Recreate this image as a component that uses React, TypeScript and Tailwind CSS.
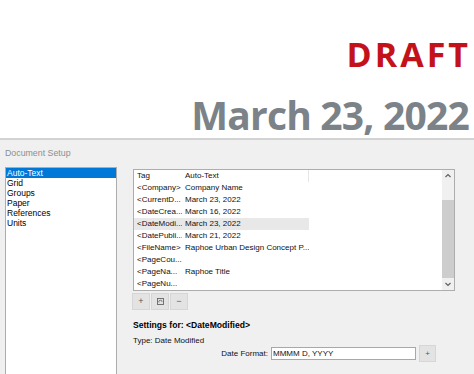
import React from "react";

const rows: [string, string][] = [
  ["<Company>", "Company Name"],
  ["<CurrentD...", "March 23, 2022"],
  ["<DateCrea...", "March 16, 2022"],
  ["<DateModi...", "March 23, 2022"],
  ["<DatePubli...", "March 21, 2022"],
  ["<FileName>", "Raphoe Urban Design Concept P..."],
  ["<PageCou...", ""],
  ["<PageNa...", "Raphoe Title"],
  ["<PageNu...", ""],
];

const items = ["Auto-Text", "Grid", "Groups", "Paper", "References", "Units"];

function SmallBtn({ children }: { children: React.ReactNode }) {
  return (
    <div className="w-[18px] h-[17px] bg-[#e3e3e3] border border-[#d6d6d6] flex items-center justify-center text-[#555]">
      {children}
    </div>
  );
}

export default function App() {
  return (
    <div className="w-[474px] h-[374px] overflow-hidden bg-white font-['Liberation_Sans',Arial,sans-serif]">
      <div className="h-[138px] flex flex-col items-end pr-[5px] font-['Open_Sans',sans-serif] font-bold">
        <div className="mt-[37px] text-[34px] leading-[34px] tracking-[3px] -mr-[2px] text-[#c4121a]">DRAFT</div>
        <div className="mt-[24px] text-[39px] leading-[39px] tracking-[-0.8px] text-[#7b8288]">March 23, 2022</div>
      </div>
      <div className="h-[236px] bg-[#f0f0f0] border-t-2 border-[#d2d2d2] flex flex-col">
        <div className="pl-[5px] pt-[7px] h-[27px] text-[8.8px] leading-[12px] text-[#8e8e8e]">Document Setup</div>
        <div className="flex flex-1">
          <div className="ml-[5px] w-[112px] bg-white border border-[#adadad] border-b-0 pt-0 text-[8.5px] text-black">
            {items.map((it, i) => (
              <div
                key={it}
                className={
                  i === 0
                    ? "h-[10px] leading-[10px] pl-[1px] bg-[#0078d7] text-white"
                    : "h-[10px] leading-[10px] pl-[1px]"
                }
              >
                {it}
              </div>
            ))}
          </div>
          <div className="flex-1 flex flex-col pl-[16px] pt-[2px]">
            <div className="w-[322px] h-[122px] bg-white border border-[#adadad] flex text-[8px] text-[#111]">
              <div className="flex-1 flex flex-col">
                <div className="flex h-[12px] items-center">
                  <div className="w-[48px] pl-[3px]">Tag</div>
                  <div className="w-[127px] h-full pl-[3px] flex items-center border-r border-[#e6e6e6]">Auto-Text</div>
                </div>
                {rows.map(([t, v], i) => (
                  <div key={i} className={i === 3 ? "flex h-[12px] items-center bg-[#e8e8e8] w-[175px]" : "flex h-[12px] items-center"}>
                    <div className="w-[48px] pl-[3px] whitespace-nowrap overflow-hidden">{t}</div>
                    <div className="w-[127px] pl-[3px] whitespace-nowrap overflow-hidden">{v}</div>
                  </div>
                ))}
              </div>
              <div className="w-[12px] bg-[#f0f0f0] flex flex-col items-center">
                <svg width="12" height="12" viewBox="0 0 12 12" className="shrink-0">
                  <path d="M3.5 7 L6 4.5 L8.5 7" fill="none" stroke="#606060" strokeWidth="1.2" />
                </svg>
                <div className="h-[18px]" />
                <div className="w-[12px] h-[78px] bg-[#cdcdcd]" />
                <div className="flex-1" />
                <svg width="12" height="11" viewBox="0 0 12 11" className="shrink-0">
                  <path d="M3.5 4 L6 6.5 L8.5 4" fill="none" stroke="#606060" strokeWidth="1.2" />
                </svg>
              </div>
            </div>
            <div className="flex gap-[1px] mt-[2px] -ml-[1px]">
              <SmallBtn>
                <span className="text-[9px] leading-none">+</span>
              </SmallBtn>
              <SmallBtn>
                <svg width="9" height="9" viewBox="0 0 9 9">
                  <rect x="1.5" y="1.5" width="6" height="6" fill="none" stroke="#666" strokeWidth="0.9" />
                  <path d="M3 5.5 A1.6 1.6 0 1 1 6 5" fill="none" stroke="#666" strokeWidth="0.8" />
                </svg>
              </SmallBtn>
              <SmallBtn>
                <span className="text-[9px] leading-none">−</span>
              </SmallBtn>
            </div>
            <div className="mt-[10px] h-[10px] leading-[10px] text-[8.6px] font-bold text-black">Settings for: &lt;DateModified&gt;</div>
            <div className="mt-[6px] h-[10px] leading-[10px] text-[8px] text-[#111]">Type: Date Modified</div>
            <div className="-mt-[1px] flex items-center h-[17px] text-[8px] text-[#111]">
              <div className="w-[136px] text-right pr-[1px]">Date Format:</div>
              <div className="ml-[2px] w-[145px] h-[13px] bg-white border border-[#a8a8a8] pl-[1px] leading-[11px]">MMMM D, YYYY</div>
              <div className="ml-[3px] w-[17px] h-[17px] bg-[#e3e3e3] border border-[#d6d6d6] flex items-center justify-center text-[8px] text-[#555]">+</div>
            </div>
          </div>
        </div>
      </div>
    </div>
  );
}
